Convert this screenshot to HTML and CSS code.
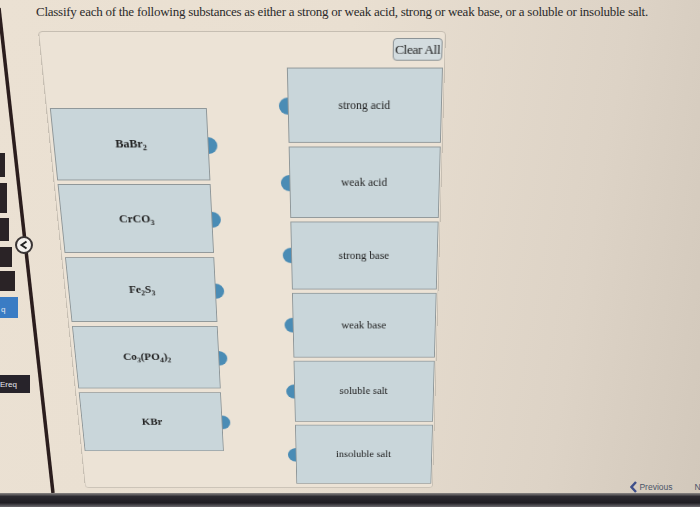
FILE: index.html
```html
<!DOCTYPE html>
<html>
<head>
<meta charset="utf-8">
<link rel="stylesheet" href="styles.css">
</head>
<body>
<div class="screen">
  <div class="main">
    <p class="prompt">Classify each of the following substances as either a strong or weak acid, strong or weak base, or a soluble or insoluble salt.</p>
    <div class="panel">
      <div class="toolbar"><button class="clear">Clear All</button></div>
      <div class="board">
        <div class="sources">
          <div class="card src"><span>BaBr<sub>2</sub></span></div>
          <div class="card src"><span>CrCO<sub>3</sub></span></div>
          <div class="card src"><span>Fe<sub>2</sub>S<sub>3</sub></span></div>
          <div class="card src"><span>Co<sub>3</sub>(PO<sub>4</sub>)<sub>2</sub></span></div>
          <div class="card src"><span>KBr</span></div>
        </div>
        <div class="targets">
          <div class="card tgt"><span>strong acid</span></div>
          <div class="card tgt"><span>weak acid</span></div>
          <div class="card tgt"><span>strong base</span></div>
          <div class="card tgt"><span>weak base</span></div>
          <div class="card tgt"><span>soluble salt</span></div>
          <div class="card tgt"><span>insoluble salt</span></div>
        </div>
      </div>
    </div>
    <div class="nav">
      <span class="nav-link"><svg width="7" height="12" viewBox="0 0 7 12"><path d="M6 1 L1.5 6 L6 11" fill="none" stroke="#3f4f8a" stroke-width="2.4"/></svg>Previous</span>
      <span class="nav-link">Next</span>
    </div>
  </div>
  <svg class="side-art" width="60" height="493" viewBox="0 0 60 493">
    <rect x="0" y="153" width="5" height="24" fill="#2a2326"/>
    <rect x="0" y="183" width="7" height="30" fill="#2a2326"/>
    <rect x="0" y="218" width="9" height="23" fill="#2a2326"/>
    <rect x="0" y="247" width="12" height="20" fill="#2a2326"/>
    <rect x="0" y="271" width="15" height="20" fill="#2a2326"/>
    <rect x="0" y="297" width="18" height="21" fill="#3a7cc4"/>
    <text x="1" y="312" class="side-txt">q</text>
    <rect x="0" y="375" width="30" height="18" fill="#27232a"/>
    <text x="0" y="387" class="side-txt">Ereq</text>
    <line x1="-1" y1="8" x2="53" y2="493" stroke="#2b1d1d" stroke-width="3.5"/>
    <circle cx="24" cy="245" r="8" fill="#f4f1ee" stroke="#3a3535" stroke-width="2"/>
    <path d="M26.5 241.5 L21.5 245 L26.5 248.5" fill="none" stroke="#222" stroke-width="2"/>
  </svg>
  <div class="bezel"></div>
</div>
</body>
</html>
```
FILE: styles.css
```css
html, body {
  margin: 0;
  padding: 0;
}
body {
  width: 700px;
  height: 507px;
  overflow: hidden;
  background: linear-gradient(100deg, #ebe1d3 0%, #e9dfd1 45%, #ddd3c6 80%, #d2c8bb 100%);
  font-family: "Liberation Serif", "Times New Roman", serif;
  color: #222;
}
.screen {
  display: grid;
  grid-template-columns: 700px;
  grid-template-rows: 493px 14px;
}
.side-art {
  grid-area: 1 / 1;
  display: block;
}
.side-txt {
  font-family: "Liberation Sans", Arial, sans-serif;
  font-size: 8px;
  fill: #e6e9ef;
}
.main {
  grid-area: 1 / 1;
  display: grid;
  grid-template-columns: 411px 1fr;
  grid-template-rows: auto minmax(0, 1fr);
  padding-left: 36px;
  min-height: 0;
}
.prompt {
  grid-column: 1 / 3;
  margin: 4px 0 0;
  font-size: 13px;
  line-height: 16px;
  letter-spacing: -0.25px;
  color: #2a2a2a;
  white-space: nowrap;
}
/* the panel is laid out flat, then tilted like the photographed screen */
.panel {
  align-self: start;
  margin: 11px 0 0 2px;
  width: 408px;
  height: 536px;
  box-sizing: border-box;
  border: 1px solid #c6beb2;
  border-radius: 4px;
  background: #ece3d6;
  transform-origin: 0 0;
  transform: matrix3d(1, 0, 0, 0, 0.102871, 1, 0, 0.000322581, 0, 0, 1, 0, 0, 0, 0, 1);
}
.toolbar {
  display: flex;
  justify-content: flex-end;
  padding: 6px 2px 0 0;
}
.clear {
  width: 50px;
  height: 23px;
  padding: 0;
  font-family: "Liberation Serif", serif;
  font-size: 13.5px;
  letter-spacing: -0.4px;
  color: #222;
  background: #d3dcdf;
  border: 1px solid #8b9295;
  border-radius: 4px;
}
.board {
  display: flex;
}
.sources {
  flex: 0 0 246.5px;
  box-sizing: border-box;
  padding-left: 3px;
  margin-top: 49px;
  display: flex;
  flex-direction: column;
  gap: 4.8px;
}
.targets {
  flex: 0 0 158px;
  margin-top: 7.4px;
  display: flex;
  flex-direction: column;
  gap: 4px;
}
.card {
  position: relative;
  box-sizing: border-box;
  display: flex;
  align-items: center;
  justify-content: center;
  background: #c9d6da;
  border: 1px solid #8f9799;
  color: #222;
}
.card sub {
  font-size: 0.68em;
  vertical-align: -0.35em;
  line-height: 0;
}
.src {
  width: 161px;
  height: 77.6px;
  font-size: 12.5px;
  font-weight: bold;
}
.tgt {
  width: 158px;
  height: 78.8px;
  font-size: 12px;
}
.src::after {
  content: "";
  position: absolute;
  top: 50%;
  right: -10px;
  width: 9px;
  height: 18px;
  margin-top: -8px;
  border-radius: 0 9px 9px 0;
  background: #4a8cb5;
}
.tgt::before {
  content: "";
  position: absolute;
  top: 50%;
  left: -10px;
  width: 9px;
  height: 18px;
  margin-top: -9px;
  border-radius: 9px 0 0 9px;
  background: #4a8cb5;
}
.nav {
  grid-column: 2;
  grid-row: 2;
  align-self: end;
  justify-self: end;
  margin: 0 -12px 0 0;
  display: flex;
  gap: 22px;
  font-family: "Liberation Sans", Arial, sans-serif;
  font-size: 8.5px;
  color: #4a5468;
  line-height: 12px;
  height: 13px;
}
.nav-link {
  display: flex;
  align-items: center;
  gap: 2px;
}
.bezel {
  grid-area: 2 / 1;
  background: linear-gradient(180deg, #8c8886 0%, #2c2a30 25%, #1f1d23 70%, #6d6b70 100%);
}
```
